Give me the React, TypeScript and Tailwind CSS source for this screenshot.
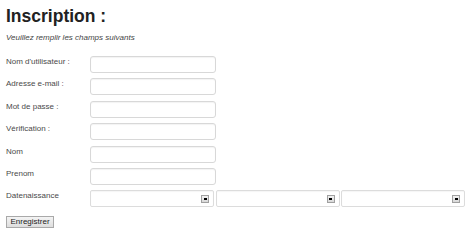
import React from "react";

const fields = [
  "Nom d'utilisateur :",
  "Adresse e-mail :",
  "Mot de passe :",
  "Vérification :",
  "Nom",
  "Prenom",
];

const SelectBox = () => (
  <div className="relative flex h-[17px] w-[124px] items-center justify-end rounded-[2px] border border-[#dcdcdc] bg-white pr-[4px] shadow-[inset_0_1px_1px_rgba(0,0,0,0.04)]">
    {/* little windows-style dropdown button */}
    <div className="flex h-[8px] w-[8px] items-center justify-center border border-[#a0a0a0] bg-gradient-to-b from-[#f2f2f2] to-[#d8d8d8]">
      <div className="h-[2px] w-[3px] bg-black" />
    </div>
  </div>
);

const App = () => {
  return (
    <div
      className="min-h-screen bg-white pl-[6px] text-[#4a4a4a]"
      style={{ fontFamily: '"Liberation Sans", Arial, sans-serif' }}
    >
      <h1 className="pt-[6px] text-[17.5px] leading-[20px] font-bold text-[#222]">
        Inscription :
      </h1>
      <p className="mt-[7px] text-[8px] leading-[10px] text-[#444] italic">
        Veuillez remplir les champs suivants
      </p>

      <div className="mt-[13px] flex flex-col gap-[5.4px]">
        {fields.map((label) => (
          <div key={label} className="flex items-start">
            <label className="w-[84px] pt-[1px] text-[8px] leading-[10px]">
              {label}
            </label>
            <input
              type="text"
              className="h-[17px] w-[126px] rounded-[3px] border border-[#d8d8d8] bg-white shadow-[inset_0_1px_1px_rgba(0,0,0,0.05)] outline-none"
            />
          </div>
        ))}

        <div className="flex items-start">
          <label className="w-[84px] pt-[1px] text-[8px] leading-[10px]">
            Datenaissance
          </label>
          <div className="flex gap-[1.5px]">
            <SelectBox />
            <SelectBox />
            <SelectBox />
          </div>
        </div>
      </div>

      <button className="mt-[7.5px] h-[12px] w-[48px] border border-[#a9a9a9] bg-gradient-to-b from-[#f4f4f4] to-[#dedede] text-[8px] leading-[10px] text-[#222]">
        Enregistrer
      </button>
    </div>
  );
};

export default App;
